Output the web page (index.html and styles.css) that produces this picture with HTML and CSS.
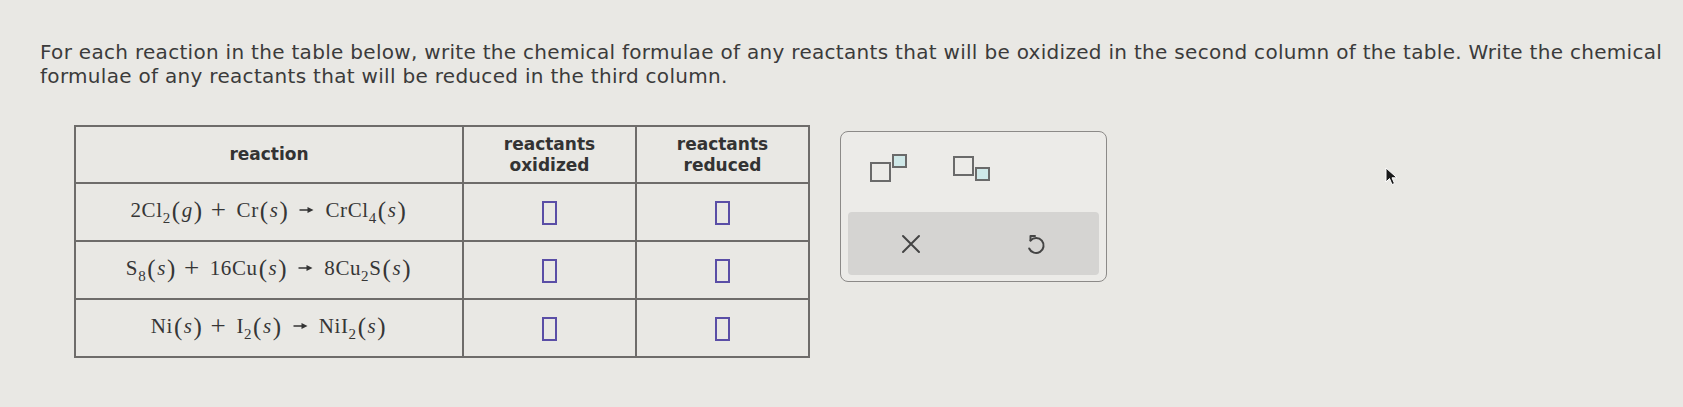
FILE: index.html
```html
<!DOCTYPE html>
<html lang="en">
<head>
<meta charset="utf-8">
<title>Oxidized and reduced reactants</title>
<link rel="stylesheet" href="styles.css">
</head>
<body>
<main class="page">
  <p class="prompt">For each reaction in the table below, write the chemical formulae of any reactants that will be oxidized in the second column of the table. Write the chemical formulae of any reactants that will be reduced in the third column.</p>
  <div class="work">
    <table class="rx">
      <thead>
        <tr>
          <th class="c-rx">reaction</th>
          <th class="c-in"><span class="hl">reactants</span><span class="hl">oxidized</span></th>
          <th class="c-in"><span class="hl">reactants</span><span class="hl">reduced</span></th>
        </tr>
      </thead>
      <tbody>
        <tr>
          <td class="c-rx"><span class="eq">2Cl<sub>2</sub><span class="p">(</span><i>g</i><span class="p">)</span><span class="op">+</span>Cr<span class="p">(</span><i>s</i><span class="p">)</span><svg class="arr" viewBox="0 0 14 8" width="15" height="8"><path d="M0 4H9" stroke="#333" stroke-width="1.5"/><path d="M8 1L14 4L8 7Z" fill="#333"/></svg>CrCl<sub>4</sub><span class="p">(</span><i>s</i><span class="p">)</span></span></td>
          <td><span class="slot"></span></td>
          <td><span class="slot"></span></td>
        </tr>
        <tr>
          <td class="c-rx"><span class="eq">S<sub>8</sub><span class="p">(</span><i>s</i><span class="p">)</span><span class="op">+</span>16Cu<span class="p">(</span><i>s</i><span class="p">)</span><svg class="arr" viewBox="0 0 14 8" width="15" height="8"><path d="M0 4H9" stroke="#333" stroke-width="1.5"/><path d="M8 1L14 4L8 7Z" fill="#333"/></svg>8Cu<sub>2</sub>S<span class="p">(</span><i>s</i><span class="p">)</span></span></td>
          <td><span class="slot"></span></td>
          <td><span class="slot"></span></td>
        </tr>
        <tr>
          <td class="c-rx"><span class="eq">Ni<span class="p">(</span><i>s</i><span class="p">)</span><span class="op">+</span>I<sub>2</sub><span class="p">(</span><i>s</i><span class="p">)</span><svg class="arr" viewBox="0 0 14 8" width="15" height="8"><path d="M0 4H9" stroke="#333" stroke-width="1.5"/><path d="M8 1L14 4L8 7Z" fill="#333"/></svg>NiI<sub>2</sub><span class="p">(</span><i>s</i><span class="p">)</span></span></td>
          <td><span class="slot"></span></td>
          <td><span class="slot"></span></td>
        </tr>
      </tbody>
    </table>

    <div class="palette">
      <div class="tools">
        <button class="tool" aria-label="superscript">
          <svg viewBox="0 0 38 28" width="38" height="28"><rect x="1" y="9" width="19" height="18" fill="none" stroke="#6a6a6a" stroke-width="2"/><rect x="23" y="1" width="13" height="12" fill="#cfe8e8" stroke="#6a6a6a" stroke-width="2"/></svg>
        </button>
        <button class="tool" aria-label="subscript">
          <svg viewBox="0 0 38 28" width="38" height="28"><rect x="1" y="3" width="19" height="18" fill="none" stroke="#6a6a6a" stroke-width="2"/><rect x="23" y="14" width="13" height="12" fill="#cfe8e8" stroke="#6a6a6a" stroke-width="2"/></svg>
        </button>
      </div>
      <div class="actions">
        <button class="act" aria-label="clear">
          <svg viewBox="0 0 20 20" width="20" height="20"><path d="M2 2L18 18M18 2L2 18" stroke="#444" stroke-width="2" stroke-linecap="round"/></svg>
        </button>
        <button class="act" aria-label="undo">
          <svg viewBox="0 0 22 22" width="22" height="22" fill="none" stroke="#444" stroke-width="2" stroke-linecap="round" stroke-linejoin="round"><path d="M10 3H5.5V7.5"/><path d="M5.5 7.5A7.5 7.5 0 1 1 4.2 15.5"/></svg>
        </button>
      </div>
    </div>
  </div>

  <svg class="cursor" viewBox="0 0 14 20" width="14" height="20"><path d="M1 1L1 15L4.5 11.5L7 17.5L9.5 16.5L7 10.8L12 10.8Z" fill="#1a1a1a" stroke="#fff" stroke-width="1"/></svg>
</main>
</body>
</html>
```

FILE: styles.css
```css
html, body {
  margin: 0;
  background: #e9e8e4;
}

body {
  font-family: "DejaVu Sans", "Open Sans", sans-serif;
  color: #3b3b3b;
}

.page {
  position: relative;
  box-sizing: border-box;
  height: 407px;
  padding: 41px 0 0 40px;
}

.prompt {
  margin: 0;
  width: 1635px;
  font-size: 20px;
  letter-spacing: 0.3px;
  line-height: 23.5px;
}

.work {
  display: flex;
  align-items: flex-start;
  gap: 30px;
  margin-top: 37px;
  padding-left: 34px;
}

.rx {
  border-collapse: collapse;
  table-layout: fixed;
  width: 735px;
}

.rx th,
.rx td {
  border: 2px solid #6e6c6a;
  padding: 0;
  text-align: center;
  vertical-align: middle;
}

.rx th {
  height: 55px;
  font-size: 17px;
  font-weight: 700;
  line-height: 21px;
  color: #333;
}

.hl {
  display: block;
}

.rx td {
  height: 56px;
}

.rx .c-rx {
  width: 386px;
}

.rx .c-in {
  width: 171px;
}

.eq {
  display: inline-flex;
  align-items: center;
  position: relative;
  top: -2px;
  font-family: "Liberation Serif", "Times New Roman", serif;
  font-size: 21px;
  letter-spacing: 0.6px;
  color: #363636;
  white-space: nowrap;
}

.eq sub {
  font-size: 15px;
  line-height: 0;
  position: relative;
  top: 8px;
  vertical-align: baseline;
}

.eq i {
  font-style: italic;
}

.eq .p {
  font-size: 25px;
  line-height: 1;
  margin: 0 1px;
}

.eq .op {
  font-size: 27px;
  line-height: 1;
  margin: 0 10px 0 7px;
}

.eq .arr {
  margin: 0 11px 0 10px;
}

.slot {
  display: inline-block;
  width: 11px;
  height: 20px;
  border: 2px solid #5a4ea6;
  vertical-align: middle;
  position: relative;
  top: 1px;
}

.palette {
  box-sizing: border-box;
  width: 267px;
  height: 151px;
  margin-top: 6px;
  border: 1.5px solid #8c8a88;
  border-radius: 8px;
  background: #ecebe8;
  padding: 22px 7px 6px 7px;
  display: flex;
  flex-direction: column;
  justify-content: space-between;
}

.tools {
  display: flex;
  gap: 45px;
  padding-left: 22px;
}

.tool,
.act {
  border: 0;
  background: transparent;
  padding: 0;
  margin: 0;
  display: flex;
  align-items: center;
  justify-content: center;
}

.actions {
  display: flex;
  height: 63px;
  border-radius: 4px;
  background: #d5d4d2;
}

.act {
  flex: 1;
}

.cursor {
  position: absolute;
  left: 1385px;
  top: 167px;
}
```
